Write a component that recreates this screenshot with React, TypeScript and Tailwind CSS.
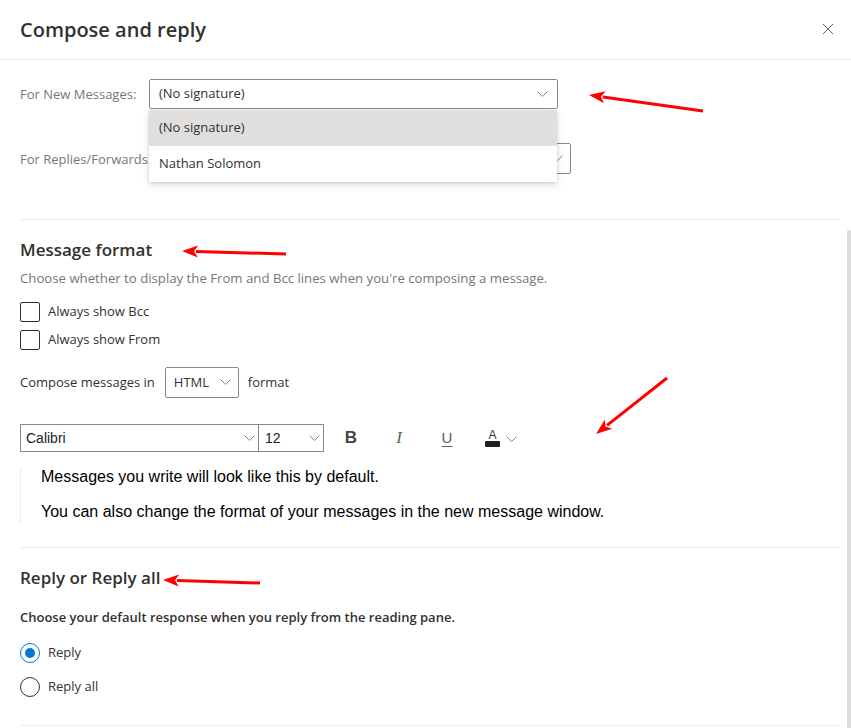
import React from "react";

const ui = { fontFamily: '"Open Sans", "Noto Sans", Arial, sans-serif' };

function Chevron({ className = "" }: { className?: string }) {
  return (
    <svg width="11" height="7" viewBox="0 0 11 7" className={className}>
      <polyline points="0.5,0.5 5.5,5.5 10.5,0.5" fill="none" stroke="#8a8886" strokeWidth="1" />
    </svg>
  );
}

function Arrow({ x1, y1, x2, y2 }: { x1: number; y1: number; x2: number; y2: number }) {
  // tail (x1,y1) -> tip (x2,y2)
  const dx = x2 - x1;
  const dy = y2 - y1;
  const len = Math.hypot(dx, dy);
  const ux = dx / len;
  const uy = dy / len;
  const head = 16;
  const bx = x2 - ux * head;
  const by = y2 - uy * head;
  const px = -uy * 6;
  const py = ux * 6;
  return (
    <g>
      <line x1={x1} y1={y1} x2={bx + ux * 2} y2={by + uy * 2} stroke="#ff0000" strokeWidth="3" />
      <polygon points={`${x2},${y2} ${bx + px},${by + py} ${bx + ux * 4},${by + uy * 4} ${bx - px},${by - py}`} fill="#ff0000" />
    </g>
  );
}

function Checkbox({ label }: { label: string }) {
  return (
    <div className="flex items-center h-5">
      <div className="w-5 h-5 border border-[#323130] rounded-[2px]" />
      <span className="ml-2 text-[13px] text-[#323130]">{label}</span>
    </div>
  );
}

function Radio({ label, checked }: { label: string; checked?: boolean }) {
  return (
    <div className="flex items-center h-5">
      {checked ? (
        <div className="w-5 h-5 rounded-full border border-[#0078d4] flex items-center justify-center">
          <div className="w-[10px] h-[10px] rounded-full bg-[#0078d4]" />
        </div>
      ) : (
        <div className="w-5 h-5 rounded-full border border-[#323130]" />
      )}
      <span className="ml-2 text-[13px] text-[#323130]">{label}</span>
    </div>
  );
}

export default function App() {
  return (
    <div className="relative w-[851px] h-[728px] overflow-hidden bg-white" style={ui}>
      {/* HEADER */}
      <div className="h-[60px] flex items-center justify-between pl-5 pr-[17px] border-b border-[#edebe9]">
        <h1 className="text-[20px] font-semibold text-[#323130]">Compose and reply</h1>
        <svg width="12" height="12" viewBox="0 0 12 12" className="-mt-[1px]">
          <path d="M1 1 L11 11 M11 1 L1 11" stroke="#605e5c" strokeWidth="1" />
        </svg>
      </div>

      {/* CONTENT */}
      <div className="pl-5 pr-[11px]">
        {/* signature */}
        <div className="pt-[19px]">
          <div className="relative flex items-center h-[30px]">
            <span className="w-[129px] text-[13px] text-[#797775] pt-[2px]">For New Messages:</span>
            <div className="w-[409px] h-[30px] border border-[#8a8886] rounded-[2px] flex items-center justify-between pl-[9px] pr-[9px]">
              <span className="text-[13px] text-[#323130]">(No signature)</span>
              <Chevron />
            </div>
            {/* open menu */}
            <div className="absolute left-[129px] top-[31px] w-[408px] bg-white shadow-[0_3px_8px_rgba(0,0,0,0.13),0_1px_3px_rgba(0,0,0,0.1)] z-10">
              <div className="h-9 flex items-center pl-[10px] bg-[#e1dfdd] text-[13px] text-[#323130]">(No signature)</div>
              <div className="h-9 flex items-center pl-[10px] text-[13px] text-[#323130]">Nathan Solomon</div>
            </div>
          </div>
          <div className="flex items-center h-[31px] mt-[34px]">
            <span className="w-[129px] text-[13px] text-[#797775] whitespace-nowrap pt-[2px]">For Replies/Forwards:</span>
            <div className="w-[422px] h-[31px] border border-[#8a8886] rounded-[2px] flex items-center justify-end pr-[7px]">
              <Chevron />
            </div>
          </div>
        </div>

        <div className="mt-[45px] h-px bg-[#edebe9]" />

        {/* MESSAGE FORMAT */}
        <h2 className="mt-[18px] h-6 leading-6 text-[17px] font-semibold text-[#323130]">Message format</h2>
        <p className="mt-[6px] h-5 leading-5 text-[13.2px] text-[#797775]">
          Choose whether to display the From and Bcc lines when you're composing a message.
        </p>
        <div className="mt-[14px] flex flex-col gap-2">
          <Checkbox label="Always show Bcc" />
          <Checkbox label="Always show From" />
        </div>
        <div className="mt-[17px] flex items-center h-[31px]">
          <span className="text-[13px] text-[#323130]">Compose messages in</span>
          <div className="ml-[10px] w-[74px] h-[31px] border border-[#8a8886] rounded-[2px] flex items-center justify-between pl-2 pr-[7px]">
            <span className="text-[13px] text-[#323130]">HTML</span>
            <Chevron />
          </div>
          <span className="ml-[9px] text-[13px] text-[#323130]">format</span>
        </div>

        {/* toolbar */}
        <div className="mt-[26px] flex items-center h-[28px]">
          <div className="w-[239px] h-[28px] border border-[#8a8886] flex items-center justify-between pl-[5px] pr-[3px]">
            <span className="text-[14px] text-[#201f1e]" style={{ fontFamily: '"Liberation Sans", Arial, sans-serif' }}>Calibri</span>
            <Chevron />
          </div>
          <div className="w-[65px] h-[28px] border border-l-0 border-[#8a8886] flex items-center justify-between pl-[6px] pr-[3px]">
            <span className="text-[14px] text-[#201f1e]" style={{ fontFamily: '"Liberation Sans", Arial, sans-serif' }}>12</span>
            <Chevron />
          </div>
          <span className="ml-[19px] w-4 text-[17px] font-bold text-[#484644] text-center" style={{ fontFamily: '"Liberation Sans", Arial, sans-serif' }}>B</span>
          <span className="ml-[32px] relative w-4 text-[17px] italic text-[#605e5c] text-center" style={{ fontFamily: '"Liberation Serif", serif' }}>I</span>
          <span className="ml-[32px] w-4 text-[15px] underline underline-offset-[3px] text-[#605e5c] text-center" style={{ fontFamily: '"Liberation Sans", Arial, sans-serif' }}>U</span>
          <div className="ml-[30px] flex flex-col items-center w-[15px]">
            <span className="text-[12px] leading-[12px] text-[#323130]" style={{ fontFamily: '"Liberation Sans", Arial, sans-serif' }}>A</span>
            <div className="w-[15px] h-[6px] bg-[#201f1e] rounded-[1px]" />
          </div>
          <Chevron className="ml-[6px] mt-[3px]" />
        </div>

        {/* preview */}
        <div className="mt-[15px] border-l border-[#edebe9] pl-5 pb-[2px] text-[16px] text-black" style={{ fontFamily: '"Liberation Sans", Arial, sans-serif' }}>
          <p className="leading-5">Messages you write will look like this by default.</p>
          <p className="leading-5 mt-[15px]">You can also change the format of your messages in the new message window.</p>
        </div>

        <div className="mt-[23px] h-px bg-[#edebe9]" />

        {/* REPLY */}
        <h2 className="mt-[18px] h-6 leading-6 text-[17px] font-semibold text-[#323130]">Reply or Reply all</h2>
        <p className="mt-[17px] h-5 leading-5 text-[13px] font-semibold text-[#323130]">
          Choose your default response when you reply from the reading pane.
        </p>
        <div className="mt-4">
          <Radio label="Reply" checked />
        </div>
        <div className="mt-[14px]">
          <Radio label="Reply all" />
        </div>
        <div className="mt-[28px] h-px bg-[#edebe9]" />
      </div>

      {/* scrollbar */}
      <div className="absolute right-0 top-[230px] bottom-0 w-[4px] rounded-t bg-[#dcdcdc]" />

      {/* annotations */}
      <svg className="absolute inset-0 pointer-events-none" width="851" height="728">
        <Arrow x1={703} y1={111} x2={589} y2={95} />
        <Arrow x1={286} y1={254} x2={182} y2={251} />
        <Arrow x1={667} y1={378} x2={596} y2={434} />
        <Arrow x1={260} y1={583} x2={163} y2={580} />
      </svg>
    </div>
  );
}
